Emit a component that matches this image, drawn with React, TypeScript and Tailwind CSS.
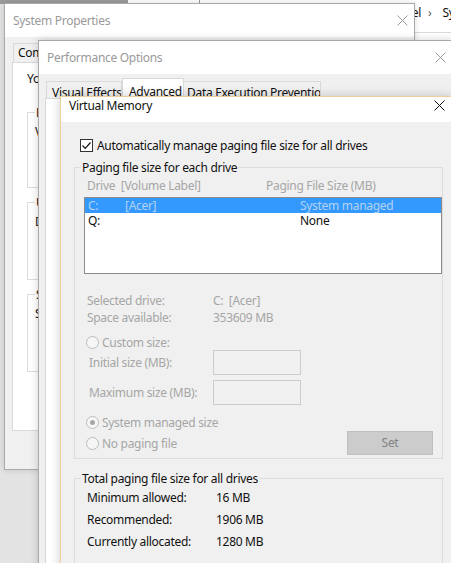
import React from 'react'

function CloseX({ dark }: { dark?: boolean }) {
  return (
    <svg width="11" height="11" viewBox="0 0 11 11" className="shrink-0">
      <path d="M0.5 0.5 L10.5 10.5 M10.5 0.5 L0.5 10.5" className={dark ? 'stroke-[#111]' : 'stroke-[#9a9a9a]'} strokeWidth="1" fill="none" />
    </svg>
  )
}

function Radio({ checked }: { checked?: boolean }) {
  return (
    <span className="flex h-[13px] w-[13px] shrink-0 items-center justify-center rounded-full border border-[#bcbcbc] bg-[#f6f6f6]">
      {checked && <span className="h-[5px] w-[5px] rounded-full bg-[#a8a8a8]" />}
    </span>
  )
}

function Checkbox() {
  return (
    <span className="flex h-[13px] w-[13px] shrink-0 items-center justify-center border border-[#333] bg-white">
      <svg width="11" height="11" viewBox="0 0 11 11">
        <path d="M1.5 5.5 L4.2 8.3 L9.5 2.5" className="stroke-[#111]" strokeWidth="1.2" fill="none" />
      </svg>
    </span>
  )
}

// group boxes of the System Properties window, mostly hidden behind the other dialogs
function SysGroup({ label, text, h }: { label: string; text: string; h: string }) {
  return (
    <fieldset className={`ml-[14px] mr-[14px] mt-[7px] border border-[#dcdcdc] ${h}`}>
      <legend className="ml-[7px] whitespace-nowrap px-[1px] leading-[15px]">{label}</legend>
      <div className="overflow-hidden whitespace-nowrap pl-[7px] pt-[4px] leading-[15px]">{text}</div>
    </fieldset>
  )
}

export default function App() {
  const dis = 'text-[#a6a6a6]'
  return (
    <div className="relative h-[563px] w-[451px] overflow-hidden whitespace-nowrap bg-[#e3e3e3] font-['Noto_Sans',sans-serif] text-[12px] tracking-[-0.3px] text-[#111]">
      {/* windows further back */}
      <div className="absolute left-0 top-0 h-[4px] w-[128px] bg-[#9b9b9b]" />
      <div className="absolute left-[128px] top-0 h-[4px] w-[72px] border-r border-[#999] bg-white" />
      <div className="absolute left-[200px] top-0 flex h-[40px] w-[260px] flex-col bg-white">
        <div className="flex h-[33px] items-start overflow-hidden border-b border-[#d9d9d9] pt-[5px] leading-[15px]">
          <span className="w-[221px] shrink-0 text-right">Control Panel</span>
          <span className="ml-[7px] shrink-0 text-[#555]">›</span>
          <span className="ml-[11px] shrink-0">System and Security</span>
        </div>
      </div>

      {/* System Properties */}
      <div className="absolute left-[4px] top-[3px] flex h-[467px] w-[411px] flex-col border border-[#aaaaaa] bg-[#f0f0f0] shadow-[0_0_6px_rgba(0,0,0,0.15)]">
        <div className="flex h-[33px] shrink-0 items-center justify-between bg-white pl-[8px] pr-[6px]">
          <span className="text-[#9a9a9a]">System Properties</span>
          <CloseX />
        </div>
        <div className="ml-[8px] mt-[6px] flex">
          <span className="h-[19px] border border-b-0 border-[#d9d9d9] bg-[#f0f0f0] px-[4px] leading-[18px]">Computer Name</span>
        </div>
        <div className="ml-[7px] mr-[8px] flex h-[369px] flex-col overflow-hidden border border-[#d9d9d9] bg-white">
          <div className="pl-[14px] pt-[8px] leading-[15px]">You must be logged on as an Administrator to make most of these changes.</div>
          <SysGroup label="Performance" text="Visual effects, processor scheduling, memory usage, and virtual memory" h="h-[83px] mt-[19px]" />
          <SysGroup label="User Profiles" text="Desktop settings related to your sign-in" h="h-[85px]" />
          <SysGroup label="Startup and Recovery" text="System startup, system failure, and debugging information" h="h-[85px]" />
        </div>
      </div>

      {/* Performance Options */}
      <div className="absolute left-[38px] top-[40px] flex h-[560px] w-[415px] flex-col border border-[#aaaaaa] bg-[#f0f0f0] shadow-[0_0_8px_rgba(0,0,0,0.18)]">
        <div className="flex h-[33px] shrink-0 items-center justify-between bg-white pl-[8px] pr-[6px]">
          <span className="text-[#9a9a9a]">Performance Options</span>
          <CloseX />
        </div>
        <div className="ml-[7px] mt-[4px] flex items-end">
          <span className="h-[17px] w-[76px] overflow-hidden border border-b-0 border-[#d9d9d9] pl-[5px] pt-[3px] leading-[15px]">Visual Effects</span>
          <span className="h-[20px] w-[62px] overflow-hidden border border-b-0 border-[#d9d9d9] bg-white pl-[6px] pt-[5px] leading-[15px]">Advanced</span>
          <span className="h-[17px] w-[137px] overflow-hidden border border-b-0 border-l-0 border-[#d9d9d9] pl-[3px] pt-[3px] leading-[15px]">Data Execution Prevention</span>
        </div>
        <div className="ml-[6px] flex-1 border border-[#d9d9d9] bg-white" />
      </div>

      {/* Virtual Memory */}
      <div className="absolute left-[60px] top-[96px] flex h-[480px] w-[392px] flex-col border-l border-t border-[#ebcf9f] bg-[#f0f0f0] shadow-[0_0_10px_rgba(0,0,0,0.2)]">
        <div className="flex h-[25px] shrink-0 items-start justify-between bg-white pl-[8px] pr-[7px] pt-[1px]">
          <span className="leading-[15px]">Virtual Memory</span>
          <span className="pt-[2px]"><CloseX dark /></span>
        </div>

        <div className="flex flex-col pl-[13px] pt-[16px]">
          <label className="ml-[6px] flex h-[15px] items-center gap-[4px] leading-[15px]">
            <Checkbox />
            <span>Automatically manage paging file size for all drives</span>
          </label>

          <fieldset className="mt-[7px] w-[369px] border border-[#dcdcdc] pb-[3px]">
            <legend className="ml-[6px] px-[1px] leading-[15px]">Paging file size for each drive</legend>
            <div className={`mt-[3px] flex h-[15px] pl-[12px] leading-[15px] ${dis}`}>
              <span className="w-[179px]">Drive&nbsp;&nbsp;[Volume Label]</span>
              <span>Paging File Size (MB)</span>
            </div>
            <div className="ml-[9px] mt-[4px] h-[77px] w-[358px] border border-[#8c8c8c] bg-white leading-[15px]">
              <div className="flex h-[15px] bg-[#3399ff] pl-[3px] text-[#b4d2f0]">
                <span className="w-[37px]">C:</span>
                <span className="w-[175px]">[Acer]</span>
                <span>System managed</span>
              </div>
              <div className="flex h-[15px] pl-[3px]">
                <span className="w-[212px]">Q:</span>
                <span>None</span>
              </div>
            </div>

            <div className={`mt-[18px] flex flex-col pl-[12px] leading-[17px] ${dis}`}>
              <div className="flex h-[17px]">
                <span className="w-[126px]">Selected drive:</span>
                <span>C:&nbsp;&nbsp;[Acer]</span>
              </div>
              <div className="flex h-[17px]">
                <span className="w-[126px]">Space available:</span>
                <span>353609 MB</span>
              </div>
            </div>

            <div className={`mt-[9px] flex h-[15px] items-center gap-[3px] pl-[11px] leading-[15px] ${dis}`}>
              <Radio />
              <span>Custom size:</span>
            </div>
            <div className={`flex h-[25px] items-center pl-[14px] ${dis}`}>
              <span className="w-[124px]">Initial size (MB):</span>
              <span className="h-[25px] w-[88px] border border-[#cccccc] bg-[#f0f0f0]" />
            </div>
            <div className={`mt-[5px] flex h-[25px] items-center pl-[14px] ${dis}`}>
              <span className="w-[124px]">Maximum size (MB):</span>
              <span className="h-[25px] w-[88px] border border-[#cccccc] bg-[#f0f0f0]" />
            </div>
            <div className={`mt-[10px] flex h-[15px] items-center gap-[3px] pl-[11px] leading-[15px] ${dis}`}>
              <Radio checked />
              <span>System managed size</span>
            </div>
            <div className={`mt-[1px] flex h-[24px] items-center justify-between pl-[11px] pr-[9px] ${dis}`}>
              <div className="flex items-center gap-[3px] leading-[15px]">
                <Radio />
                <span>No paging file</span>
              </div>
              <button className="h-[24px] w-[86px] border border-[#bfbfbf] bg-[#cccccc] text-[#838383]">Set</button>
            </div>
          </fieldset>

          <fieldset className="mt-[12px] w-[369px] border border-[#dcdcdc] pb-[10px]">
            <legend className="ml-[6px] px-[1px] leading-[15px]">Total paging file size for all drives</legend>
            <div className="flex flex-col pl-[12px] pt-[1px] leading-[22px]">
              <div className="flex h-[22px]">
                <span className="w-[129px]">Minimum allowed:</span>
                <span>16 MB</span>
              </div>
              <div className="flex h-[22px]">
                <span className="w-[129px]">Recommended:</span>
                <span>1906 MB</span>
              </div>
              <div className="flex h-[22px]">
                <span className="w-[129px]">Currently allocated:</span>
                <span>1280 MB</span>
              </div>
            </div>
          </fieldset>
        </div>
      </div>
    </div>
  )
}
